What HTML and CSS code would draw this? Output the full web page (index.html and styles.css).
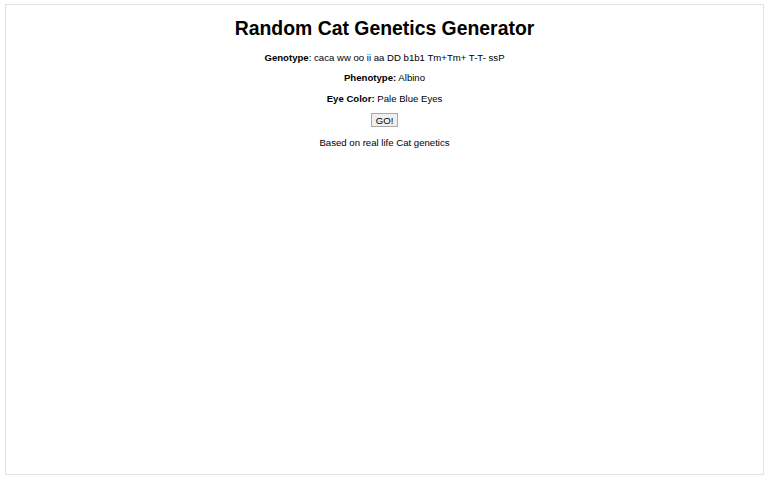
FILE: index.html
```html
<!DOCTYPE html>
<html lang="en">
<head>
    <meta charset="UTF-8">
    <meta name="viewport" content="width=device-width, initial-scale=1.0">
    <title>Random Cat Genetics Generator</title>
    <link rel="stylesheet" href="styles.css">
</head>
<body>

<div class="page">
    <h1>Random Cat Genetics Generator</h1>

    <p><b>Genotype</b>: <span id="genotype">caca ww oo ii aa DD b1b1 Tm+Tm+ T-T- ssP</span></p>
    <p><b>Phenotype:</b> <span id="phenotype">Albino</span></p>
    <p><b>Eye Color:</b> <span id="eyes">Pale Blue Eyes</span></p>

    <button onclick="generate()">GO!</button>

    <p>Based on real life Cat genetics</p>
</div>

<script>
    function generate() {
        document.getElementById('genotype').innerHTML = document.getElementById('genotype').innerHTML;
    }
</script>

</body>
</html>
```

FILE: styles.css
```css
body {
    font-family: 'Liberation Sans', Arial, sans-serif;
    margin: 0;
    padding: 4px 4px 5px 5px;
}

.page {
    border: 1px solid #e2e2e2;
    box-sizing: border-box;
    height: 471px;
    text-align: center;
    color: #000;
}

h1 {
    font-size: 19.4px;
    line-height: 22px;
    margin: 12px 0 12.5px;
}

p {
    font-size: 9.6px;
    margin: 0 0 9.5px;
    line-height: 11px;
}

button {
    display: block;
    font-family: 'Liberation Sans', Arial, sans-serif;
    font-size: 9.6px;
    height: 14px;
    padding: 0 4px;
    margin: 0 auto 9.5px;
    background-color: #efefef;
    border: 1px solid #a8a8a8;
    border-radius: 0;
    cursor: pointer;
}
```
